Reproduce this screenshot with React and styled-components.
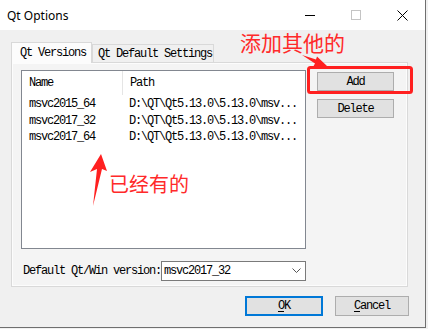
import React from "react";
import styled, { createGlobalStyle } from "styled-components";

const Global = createGlobalStyle`
  html, body { margin: 0; padding: 0; background: #f0f0f0; }
  body { width: 428px; height: 329px; overflow: hidden; }
`;

const mono = `"Liberation Mono", "Noto Sans CJK SC", monospace`;

const Page = styled.div`
  position: relative;
  width: 428px;
  height: 329px;
  background: #f0f0f0;
  overflow: hidden;
`;

const Window = styled.div`
  width: 425px;
  height: 327px;
  display: flex;
  flex-direction: column;
  background: #f0f0f0;
  border-right: 1px solid #6f6f6f;
  border-bottom: 1px solid #6f6f6f;
`;

const TitleBar = styled.div`
  height: 30px;
  flex: none;
  background: #fff;
  display: flex;
  align-items: center;
  padding-left: 7px;
`;

const Title = styled.div`
  font-family: "Noto Sans", "Open Sans", sans-serif;
  font-size: 12px;
  color: #000;
  flex: 1;
`;

const Ctl = styled.div`
  width: 46px;
  height: 30px;
  display: flex;
  align-items: center;
  justify-content: center;
`;

const Body = styled.div`
  flex: 1;
  display: flex;
  flex-direction: column;
  padding: 12px 0 0 11px;
`;

const TabBar = styled.div`
  display: flex;
  align-items: flex-end;
  height: 20px;
  position: relative;
  z-index: 1;
`;

const Tab = styled.div`
  font-family: ${mono};
  font-size: 12px;
  letter-spacing: -1.2px;
  color: #000;
  box-sizing: border-box;
  border: 1px solid #d9d9d9;
  border-bottom: none;
  display: flex;
  align-items: center;
  height: ${(p) => (p.$active ? "21px" : "18px")};
  margin-bottom: ${(p) => (p.$active ? "-1px" : "0")};
  padding: 0 ${(p) => (p.$active ? "8px" : "5px")};
  padding-top: ${(p) => (p.$active ? "0" : "1px")};
  background: ${(p) => (p.$active ? "#fcfcfc" : "#f0f0f0")};
  width: ${(p) => p.$w}px;
  white-space: nowrap;
`;

const Panel = styled.div`
  width: 397px;
  height: 225px;
  box-sizing: border-box;
  border: 1px solid #d9d9d9;
  box-shadow: inset 0 0 0 1px #fcfcfc;
  background: #f4f4f4;
  padding: 7px 0 0 9px;
  display: grid;
  grid-template-columns: 285px 77px;
  grid-template-rows: 179px auto;
  column-gap: 11px;
  row-gap: 6px;
`;

const List = styled.div`
  background: #fff;
  border: 1px solid #828790;
  box-sizing: border-box;
  display: flex;
  flex-direction: column;
`;

const Row = styled.div`
  display: grid;
  grid-template-columns: 100px 1fr;
  height: ${(p) => (p.$header ? "24px" : "16.5px")};
  align-items: center;
  font-family: ${mono};
  font-size: 12px;
  letter-spacing: -1.2px;
  color: #000;
  white-space: nowrap;
  margin-bottom: ${(p) => (p.$header ? "1px" : "0")};
`;

const Cell = styled.div`
  padding-left: 7px;
  height: 100%;
  display: flex;
  align-items: center;
  box-sizing: border-box;
  border-left: ${(p) => (p.$sep ? "1px solid #e5e5e5" : "none")};
`;

const Side = styled.div`
  display: flex;
  flex-direction: column;
  gap: 8px;
  padding-top: 2px;
`;

const Button = styled.div`
  box-sizing: border-box;
  width: ${(p) => p.$w || 77}px;
  height: ${(p) => p.$h || 19}px;
  background: #e1e1e1;
  border: ${(p) => (p.$default ? "2px solid #0078d7" : "1px solid #adadad")};
  display: flex;
  align-items: center;
  justify-content: center;
  font-family: ${mono};
  font-size: 12px;
  letter-spacing: -1.2px;
  color: #000;
`;

const U = styled.span`
  text-decoration: underline;
  text-underline-offset: 2px;
`;

const ComboRow = styled.div`
  grid-column: 1 / 2;
  display: flex;
  align-items: center;
  padding-left: 2px;
`;

const Label = styled.div`
  font-family: ${mono};
  font-size: 12px;
  letter-spacing: -1.2px;
  color: #000;
  width: 138px;
  white-space: nowrap;
`;

const Combo = styled.div`
  width: 145px;
  height: 20px;
  box-sizing: border-box;
  border: 1px solid #7a7a7a;
  background: #fff;
  display: flex;
  align-items: center;
  justify-content: space-between;
  padding: 0 4px 0 2px;
  font-family: ${mono};
  font-size: 12px;
  letter-spacing: -1.2px;
  color: #000;
`;

const Footer = styled.div`
  display: flex;
  justify-content: flex-end;
  gap: 12px;
  padding: 9px 16px 0 0;
`;

const Note = styled.div`
  position: absolute;
  left: ${(p) => p.$x}px;
  top: ${(p) => p.$y}px;
  font-family: "Noto Sans CJK SC", sans-serif;
  font-size: ${(p) => p.$s}px;
  color: #ff2a2a;
  line-height: 1;
  white-space: nowrap;
`;

const Overlay = styled.svg`
  position: absolute;
  left: 0;
  top: 0;
  pointer-events: none;
`;

const rows = [
  ["msvc2015_64", "D:\\QT\\Qt5.13.0\\5.13.0\\msv..."],
  ["msvc2017_32", "D:\\QT\\Qt5.13.0\\5.13.0\\msv..."],
  ["msvc2017_64", "D:\\QT\\Qt5.13.0\\5.13.0\\msv..."],
];

export default function App() {
  return (
    <Page>
      <Global />
      <Window>
        <TitleBar>
          <Title>Qt Options</Title>
          <Ctl>
            <svg width="10" height="10" viewBox="0 0 10 10">
              <path d="M0 5.5h10" stroke="#000" strokeWidth="1" />
            </svg>
          </Ctl>
          <Ctl>
            <svg width="10" height="10" viewBox="0 0 10 10">
              <rect x="0.5" y="0.5" width="9" height="9" fill="none" stroke="#c4c4c4" />
            </svg>
          </Ctl>
          <Ctl>
            <svg width="11" height="11" viewBox="0 0 11 11">
              <path d="M0.5 0.5L10.5 10.5M10.5 0.5L0.5 10.5" stroke="#000" strokeWidth="1" />
            </svg>
          </Ctl>
        </TitleBar>
        <Body>
          <TabBar>
            <Tab $active $w={81}>Qt Versions</Tab>
            <Tab $w={122}>Qt Default Settings</Tab>
          </TabBar>
          <Panel>
            <List>
              <Row $header>
                <Cell>Name</Cell>
                <Cell $sep>Path</Cell>
              </Row>
              {rows.map(([n, p]) => (
                <Row key={n}>
                  <Cell>{n}</Cell>
                  <Cell>{p}</Cell>
                </Row>
              ))}
            </List>
            <Side>
              <Button>Add</Button>
              <Button>Delete</Button>
            </Side>
            <ComboRow>
              <Label>Default Qt/Win version:</Label>
              <Combo>
                <span>msvc2017_32</span>
                <svg width="9" height="5" viewBox="0 0 9 5">
                  <path d="M0.5 0.5L4.5 4.5L8.5 0.5" fill="none" stroke="#555" strokeWidth="1" />
                </svg>
              </Combo>
            </ComboRow>
          </Panel>
          <Footer>
            <Button $default $w={78} $h={20}>
              <U>O</U>K
            </Button>
            <Button $w={74} $h={20}>
              <U>C</U>ancel
            </Button>
          </Footer>
        </Body>
      </Window>
      <Note $x={240} $y={32} $s={21}>添加其他的</Note>
      <Note $x={109} $y={174} $s={20}>已经有的</Note>
      <Overlay width="428" height="329" viewBox="0 0 428 329">
        <rect x="308.5" y="67.5" width="103" height="25" rx="2" fill="none" stroke="#ff2020" strokeWidth="3" />
        <polygon points="302,55 316,59.5 317,56.5 327,66 313,67 315,63.5" fill="#ff2020" />
        <polygon points="101,154 107,171 102,169 93,206 97,169 90,172" fill="#ff2020" />
      </Overlay>
    </Page>
  );
}
